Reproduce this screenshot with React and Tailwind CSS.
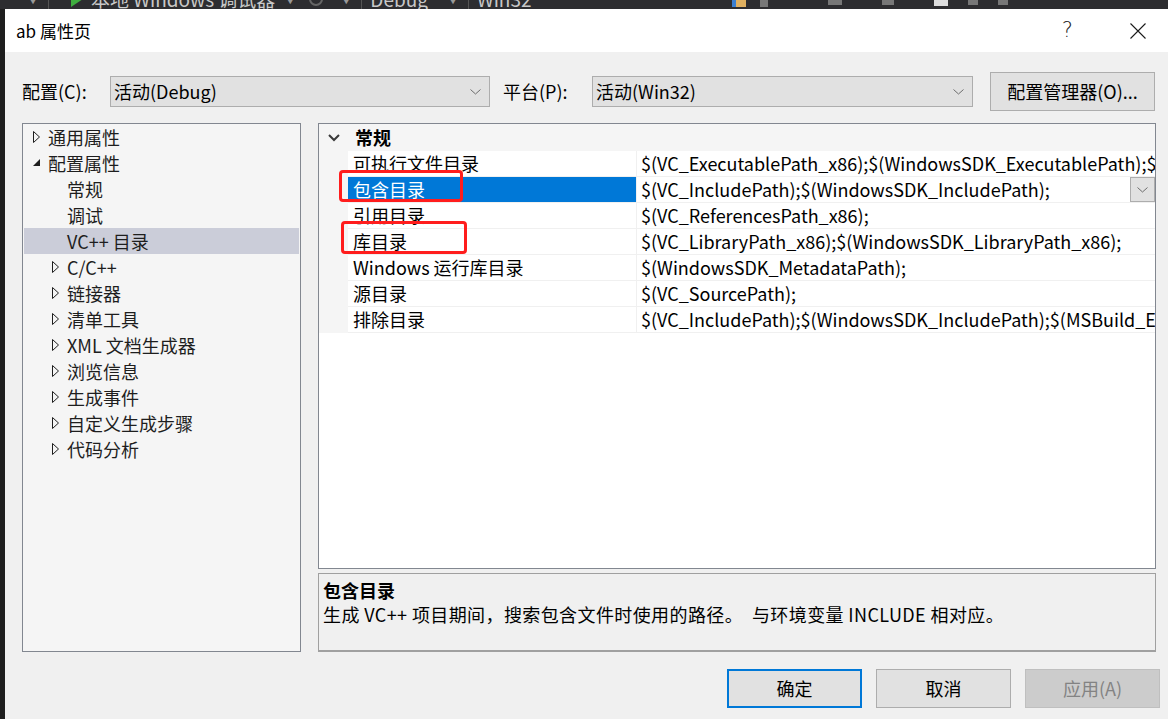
import React from "react";

const tree = [
  { label: "通用属性", level: 0, arrow: "closed" },
  { label: "配置属性", level: 0, arrow: "open" },
  { label: "常规", level: 1 },
  { label: "调试", level: 1 },
  { label: "VC++ 目录", level: 1, active: true },
  { label: "C/C++", level: 1, arrow: "closed" },
  { label: "链接器", level: 1, arrow: "closed" },
  { label: "清单工具", level: 1, arrow: "closed" },
  { label: "XML 文档生成器", level: 1, arrow: "closed" },
  { label: "浏览信息", level: 1, arrow: "closed" },
  { label: "生成事件", level: 1, arrow: "closed" },
  { label: "自定义生成步骤", level: 1, arrow: "closed" },
  { label: "代码分析", level: 1, arrow: "closed" },
];

const props = [
  ["可执行文件目录", "$(VC_ExecutablePath_x86);$(WindowsSDK_ExecutablePath);$(VS_ExecutablePath);$(MSBuild_ExecutablePath);$(FxCopDir);$(PATH);"],
  ["包含目录", "$(VC_IncludePath);$(WindowsSDK_IncludePath);", true],
  ["引用目录", "$(VC_ReferencesPath_x86);"],
  ["库目录", "$(VC_LibraryPath_x86);$(WindowsSDK_LibraryPath_x86);"],
  ["Windows 运行库目录", "$(WindowsSDK_MetadataPath);"],
  ["源目录", "$(VC_SourcePath);"],
  ["排除目录", "$(VC_IncludePath);$(WindowsSDK_IncludePath);$(MSBuild_ExecutablePath);$(VC_LibraryPath_x86);"],
];

function Chevron({ className = "" }) {
  return (
    <svg width="11" height="6" viewBox="0 0 11 6" className={className}>
      <polyline points="0.5,0.5 5.5,5 10.5,0.5" fill="none" stroke="#6d6d6d" strokeWidth="1" />
    </svg>
  );
}

function TreeArrow({ kind }) {
  if (kind === "open") {
    return (
      <svg width="8" height="8" viewBox="0 0 8 8">
        <polygon points="7,0 7,7 0,7" fill="#1e1e1e" />
      </svg>
    );
  }
  if (kind === "closed") {
    return (
      <svg width="7" height="12" viewBox="0 0 7 12">
        <polygon points="0.5,0.5 6.5,6 0.5,11.5" fill="none" stroke="#1e1e1e" strokeWidth="1" />
      </svg>
    );
  }
  return null;
}

function Combo({ text, className = "" }) {
  return (
    <div className={`h-[31px] flex items-center justify-between border border-[#adadad] bg-[#e1e1e1] pl-[3px] pr-[8px] ${className}`}>
      <span>{text}</span>
      <Chevron />
    </div>
  );
}

function Button({ children, variant }) {
  const styles = {
    primary: "border-2 border-[#0078d7] bg-[#e1e1e1] text-[#000]",
    normal: "border border-[#adadad] bg-[#e1e1e1] text-[#000]",
    disabled: "border border-[#bfbfbf] bg-[#cccccc] text-[#838383]",
  };
  return (
    <div className={`w-[135px] h-[39px] flex items-center justify-center ${styles[variant]}`}>
      {children}
    </div>
  );
}

export default function App() {
  return (
    <div className="w-[1168px] h-[719px] overflow-hidden bg-[#1e1e1e] flex flex-col font-['Segoe_UI','Noto_Sans_CJK_SC',sans-serif] text-[18px] text-[#000]">
      {/* IDE toolbar peeking out behind the dialog */}
      <div className="h-[9px] shrink-0 overflow-hidden bg-[#2d2d30]">
        <div className="-mt-[12px] h-[22px] flex items-center text-[#c8c8c8] text-[19px] whitespace-nowrap">
          <span className="ml-[28px] text-[10px] text-[#999]">▼</span>
          <span className="ml-[10px] w-px h-[22px] bg-[#555]" />
          <span className="ml-[22px] w-0 h-0 border-y-[8px] border-y-transparent border-l-[12px] border-l-[#3fae3f]" />
          <span className="ml-[8px]">本地 Windows 调试器</span>
          <span className="ml-[10px] text-[10px] text-[#999]">▼</span>
          <span className="ml-[14px] w-[14px] h-[14px] rounded-full border-2 border-[#666]" />
          <span className="ml-[18px] text-[10px] text-[#999]">▼</span>
          <span className="ml-[10px] w-px h-[22px] bg-[#555]" />
          <span className="ml-[8px]">Debug</span>
          <span className="ml-[20px] text-[10px] text-[#999]">▼</span>
          <span className="ml-[10px] w-px h-[22px] bg-[#555]" />
          <span className="ml-[8px]">Win32</span>
          <span className="ml-[200px] w-[14px] h-[16px] bg-[#e0b060] border-l-4 border-[#3b7fd0]" />
          <span className="ml-[14px] w-[8px] h-[16px] bg-[#777]" />
          <span className="ml-[60px] w-[14px] h-[12px] bg-[#777]" />
          <span className="ml-[40px] w-[12px] h-[12px] bg-[#777]" />
          <span className="ml-[40px] w-[14px] h-[14px] bg-[#ddd]" />
          <span className="ml-[20px] w-[10px] h-[12px] bg-[#777]" />
          <span className="ml-[20px] w-[10px] h-[12px] bg-[#777]" />
        </div>
      </div>

      <div className="flex-1 flex min-h-0">
        <div className="w-[5px] shrink-0 bg-[#1e1e1e]" />

        {/* property pages dialog */}
        <div className="flex-1 flex flex-col bg-[#f0f0f0]">
          <div className="h-[43px] shrink-0 bg-white flex items-center pl-[11px] pr-[22px]">
            <span className="text-[17px]">ab 属性页</span>
            <span className="ml-auto text-[21px] text-[#222] font-['DejaVu_Sans',sans-serif] font-extralight">?</span>
            <svg width="16" height="16" viewBox="0 0 16 16" className="ml-[57px]">
              <path d="M0.5 0.5 L15.5 15.5 M15.5 0.5 L0.5 15.5" stroke="#1a1a1a" strokeWidth="1.1" />
            </svg>
          </div>

          <div className="flex-1 flex flex-col pl-[17px] pr-[8px]">
            {/* configuration / platform selection */}
            <div className="mt-[20px] h-[39px] flex items-center">
              <span className="w-[88px]">配置(C):</span>
              <Combo text="活动(Debug)" className="w-[380px]" />
              <span className="ml-[13px] w-[89px]">平台(P):</span>
              <Combo text="活动(Win32)" className="w-[381px]" />
              <div className="ml-[17px] w-[165px] h-[39px] flex items-center justify-center border border-[#adadad] bg-[#e1e1e1]">
                配置管理器(O)...
              </div>
            </div>

            <div className="mt-[12px] flex gap-[17px]">
              {/* category tree */}
              <div className="w-[279px] h-[529px] border border-[#828790] bg-[#f5f5f5] px-px text-[#1e1e1e]">
                {tree.map((t) => (
                  <div
                    key={t.label}
                    className={`h-[26px] flex items-center ${t.active ? "bg-[#cbcdd9]" : ""}`}
                  >
                    <span className={`${t.level === 0 ? "ml-[9px]" : "ml-[28px]"} w-[15px] flex items-center`}>
                      <TreeArrow kind={t.arrow} />
                    </span>
                    <span>{t.label}</span>
                  </div>
                ))}
              </div>

              <div className="w-[838px] flex flex-col gap-[4px]">
                {/* property grid */}
                <div className="relative h-[446px] border border-[#828790] bg-white overflow-hidden">
                  <div className="h-[27px] flex items-center bg-[#f5f5f5]">
                    <svg width="12" height="8" viewBox="0 0 12 8" className="ml-[9px]">
                      <polyline points="1,1 6,6 11,1" fill="none" stroke="#3a3a3a" strokeWidth="2" />
                    </svg>
                    <span className="ml-[15px] font-bold">常规</span>
                  </div>
                  {props.map(([name, value, selected]) => (
                    <div key={name} className="h-[26px] flex">
                      <div className="w-[29px] shrink-0 bg-[#f5f5f5]" />
                      <div
                        className={`w-[288px] shrink-0 flex items-center pl-[5px] border-b border-[#f0f0f0] ${
                          selected ? "bg-[#0078d7] text-white" : ""
                        }`}
                      >
                        {name}
                      </div>
                      <div className="flex-1 min-w-0 flex items-center border-l border-b border-[#f0f0f0] pl-[4px] whitespace-nowrap overflow-hidden">
                        <span className="flex-1 overflow-hidden">{value}</span>
                        {selected && (
                          <div className="w-[25px] h-[25px] shrink-0 flex items-center justify-center border border-[#adadad] bg-[#e1e1e1]">
                            <Chevron />
                          </div>
                        )}
                      </div>
                    </div>
                  ))}

                  {/* red annotation boxes */}
                  <div className="absolute left-[20px] top-[46px] w-[124px] h-[32px] border-[3px] border-[#ff1d1d] rounded-[4px]" />
                  <div className="absolute left-[22px] top-[97px] w-[126px] h-[33px] border-[3px] border-[#ff1d1d] rounded-[4px]" />
                </div>

                {/* description */}
                <div className="h-[79px] border border-b-2 border-[#a0a0a0] bg-[#f0f0f0] pl-[4px] pt-[3px]">
                  <div className="font-bold leading-[26px]">包含目录</div>
                  <div className="leading-[22px] text-[18px] tracking-[0.4px] whitespace-pre">
                    生成 VC++ 项目期间，搜索包含文件时使用的路径。  与环境变量 INCLUDE 相对应。
                  </div>
                </div>
              </div>
            </div>

            {/* dialog buttons */}
            <div className="mt-[17px] flex justify-end gap-[14px]">
              <Button variant="primary">确定</Button>
              <Button variant="normal">取消</Button>
              <Button variant="disabled">应用(A)</Button>
            </div>
          </div>
        </div>
      </div>
    </div>
  );
}
